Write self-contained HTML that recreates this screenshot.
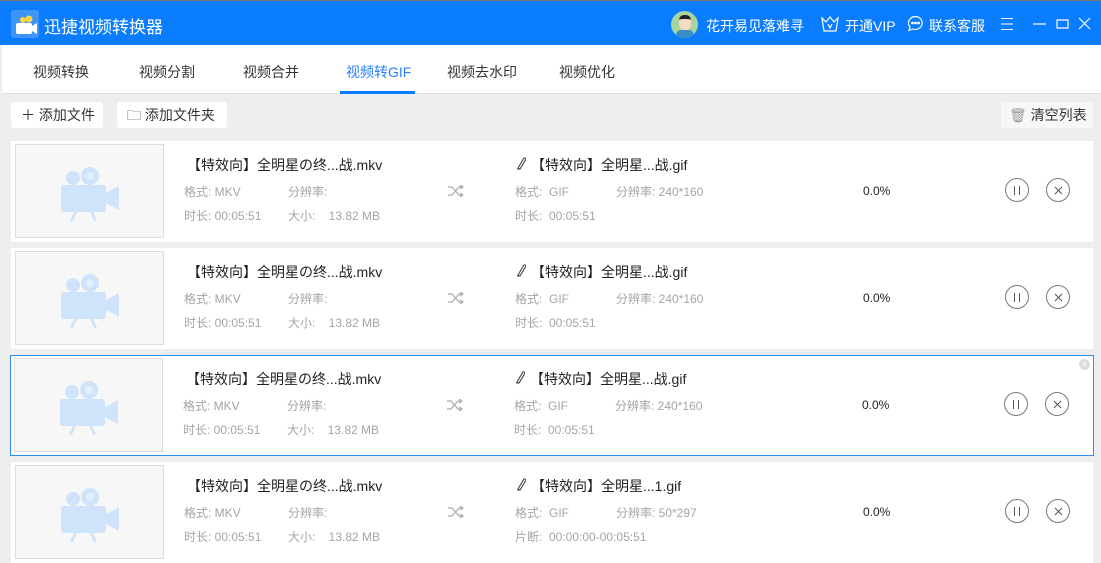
<!DOCTYPE html>
<html><head><meta charset="utf-8"><style>
*{margin:0;padding:0;box-sizing:border-box}
body{width:1101px;height:559px;overflow:hidden;background:#eeedf0;font-family:"Liberation Sans","Noto Sans CJK SC",sans-serif;position:relative}
.top{position:absolute;left:0;top:0;width:1101px;height:45px;background:#0a7cff;color:#fff;border-top:1px solid #777}
.tabs{position:absolute;left:2px;top:45px;width:1099px;height:49px;background:#fff;border-bottom:1px solid #ddd}
.tab{position:absolute;top:17px;font-size:14px;color:#333}
.btn{position:absolute;top:102px;height:26px;background:#fff;border-radius:3px;font-size:14px;color:#333;line-height:26px;padding-left:10px}
.card{position:absolute;left:11px;width:1082px;height:101px;background:#fff}
.card.sel{left:10px;width:1084px;border:1px solid #2b8cf2}
.thumb{position:absolute;left:4px;top:3px;width:149px;height:94px;background:#f7f7f7;border:1px solid #ddd}
.t{position:absolute;font-size:14px;color:#222;white-space:nowrap}
.g{position:absolute;font-size:12px;color:#a5a5a5;white-space:nowrap}
.c{position:absolute;width:24px;height:24px;border:1px solid #777;border-radius:50%;top:37px}
</style></head><body>
<div class="top">
<svg style="position:absolute;left:11px;top:9px" width="28" height="28"><rect width="28" height="28" rx="3" fill="#3d95f5"/><circle cx="12" cy="10" r="3" fill="#ffd24a"/><circle cx="18" cy="9" r="3.5" fill="#ffd24a"/><rect x="5" y="13" width="16" height="11" rx="2" fill="#fff"/><path d="M21 16l5-3v11l-5-3z" fill="#fff"/></svg>
<div style="position:absolute;left:44px;top:12px;font-size:17px">迅捷视频转换器</div>
<div style="position:absolute;left:671px;top:10px;width:27px;height:27px;border-radius:50%;background:#a8d4a0;overflow:hidden"><div style="position:absolute;left:8px;top:4px;width:12px;height:15px;background:#f4dcc4;border-radius:5px;border-top:4px solid #222"></div><div style="position:absolute;left:5px;top:19px;width:18px;height:10px;background:#3a8fc8;border-radius:5px"></div></div>
<div style="position:absolute;left:706px;top:15px;font-size:14px">花开易见落难寻</div>
<svg style="position:absolute;left:821px;top:15px" width="19" height="16" fill="none" stroke="#fff" stroke-width="1.2"><path d="M1 2l4 4 4-5 4 5 4-4-2 13H3z"/><path d="M7 8l2 4 2-4"/></svg>
<div style="position:absolute;left:845px;top:15px;font-size:14px">开通VIP</div>
<svg style="position:absolute;left:907px;top:14px" width="17" height="17" fill="none" stroke="#fff" stroke-width="1.2"><path d="M8.5 1.5a7 6.5 0 1 1-3 12.5L2 15.5l1-3.5a7 6.5 0 0 1 5.5-10.5z"/><circle cx="5.5" cy="8" r=".8" fill="#fff"/><circle cx="8.5" cy="8" r=".8" fill="#fff"/><circle cx="11.5" cy="8" r=".8" fill="#fff"/></svg>
<div style="position:absolute;left:929px;top:15px;font-size:14px">联系客服</div>
<svg style="position:absolute;left:1000px;top:16px" width="14" height="14" stroke="#fff"><path d="M1 1.5h12M1 7h12M1 12.5h12"/></svg>
<svg style="position:absolute;left:1032px;top:16px" width="60" height="14" stroke="#fff" fill="none" stroke-width="1.2"><path d="M1 7h13"/><rect x="25" y="3" width="11" height="8"/><path d="M47 1l11 11M58 1L47 12"/></svg>
</div>
<div class="tabs">
<div class="tab" style="left:31px">视频转换</div>
<div class="tab" style="left:137px">视频分割</div>
<div class="tab" style="left:241px">视频合并</div>
<div class="tab" style="left:344px;color:#2b7fff">视频转GIF</div>
<div style="position:absolute;left:338px;top:46px;width:75px;height:3px;background:#0a7cff"></div>
<div class="tab" style="left:445px">视频去水印</div>
<div class="tab" style="left:557px">视频优化</div>
</div>
<div class="btn" style="left:11px;width:92px">＋ 添加文件</div>
<div class="btn" style="left:117px;width:110px">🗀 添加文件夹</div>
<div class="btn" style="left:1001px;width:92px;background:#f7f7f7;padding-left:8px"><span style="color:#999">🗑</span> 清空列表</div>

<div id="cards"></div>
<script>
var tops=[141,248,355,462];
var h='';
tops.forEach(function(y,i){
var sel=i==2;
var last=i==3;
var o=sel?-1:0;
h+='<div class="card'+(sel?' sel':'')+'" style="top:'+y+'px">'+
'<div class="thumb" style="left:'+(4+o)+'px;top:'+(3+o)+'px"><svg style="position:absolute;left:44px;top:21px" width="60" height="55"><circle cx="13" cy="12" r="7" fill="#cfe4fb"/><circle cx="30" cy="10" r="9" fill="#cfe4fb"/><circle cx="30" cy="10" r="4" fill="#e2effd"/><rect x="1" y="19" width="45" height="27" rx="3" fill="#cfe4fb"/><path d="M46 27l13-7v24l-13-7z" fill="#cfe4fb"/><path d="M14 46l-6 13h3l6-13zM33 46l6 13h-3l-6-13z" fill="#cfe4fb"/></svg></div>'+
'<div class="t" style="left:'+(176+o)+'px;top:'+(14+o)+'px">【特效向】全明星の终...战.mkv</div>'+
'<div class="g" style="left:'+(173+o)+'px;top:'+(42+o)+'px">格式: MKV</div>'+
'<div class="g" style="left:'+(277+o)+'px;top:'+(42+o)+'px">分辨率:</div>'+
'<div class="g" style="left:'+(173+o)+'px;top:'+(66+o)+'px">时长: 00:05:51</div>'+
'<div class="g" style="left:'+(277+o)+'px;top:'+(66+o)+'px">大小: &nbsp;&nbsp;&nbsp;13.82 MB</div>'+
'<svg style="position:absolute;left:'+(437+o)+'px;top:'+(44+o)+'px" width="16" height="12" fill="none" stroke="#aaa" stroke-width="1.2"><path d="M0 2h4l7 8h4M0 10h4l7-8h4M12 0l3 2-3 2M12 8l3 2-3 2"/></svg>'+
'<svg style="position:absolute;left:'+(505+o)+'px;top:'+(15+o)+'px" width="10" height="14" fill="none" stroke="#444" stroke-width="1.1"><path d="M2 12l6-10a1.5 1.5 0 0 1 2 1.2L4 13z M2 12v2"/></svg>'+
'<div class="t" style="left:'+(520+o)+'px;top:'+(14+o)+'px">【特效向】全明星...'+(last?'1':'战')+'.gif</div>'+
'<div class="g" style="left:'+(504+o)+'px;top:'+(42+o)+'px">格式: &nbsp;GIF</div>'+
'<div class="g" style="left:'+(605+o)+'px;top:'+(42+o)+'px">分辨率: '+(last?'50*297':'240*160')+'</div>'+
'<div class="g" style="left:'+(504+o)+'px;top:'+(66+o)+'px">'+(last?'片断: &nbsp;00:00:00-00:05:51':'时长: &nbsp;00:05:51')+'</div>'+
'<div class="t" style="left:'+(852+o)+'px;top:'+(43+o)+'px;font-size:12px">0.0%</div>'+
'<div class="c" style="left:'+(994+o)+'px;top:'+(37+o)+'px"><div style="position:absolute;left:8px;top:7px;height:9px;border-left:1px solid #555;border-right:1px solid #555;width:6px"></div></div>'+
'<div class="c" style="left:'+(1035+o)+'px;top:'+(37+o)+'px"><svg style="position:absolute;left:7px;top:7px" width="9" height="9" stroke="#555"><path d="M1 1l7 7M8 1L1 8"/></svg></div>'+
(sel?'<div style="position:absolute;left:1068px;top:3px;width:11px;height:11px;border-radius:50%;background:#ddd;color:#fff;font-size:9px;line-height:11px;text-align:center">×</div>':'')+
'</div>';
});
document.getElementById('cards').innerHTML=h;
</script>
</body></html>
